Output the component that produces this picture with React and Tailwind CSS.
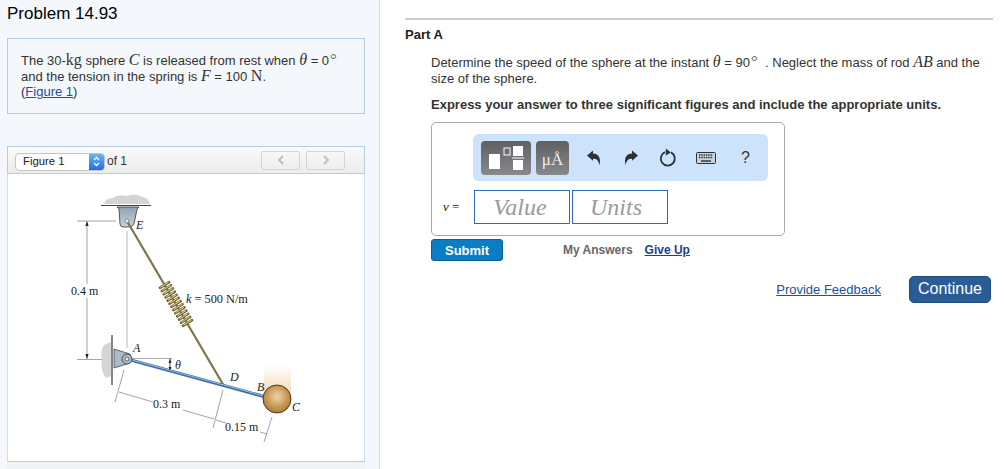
import React from "react";

const sans = { fontFamily: '"Liberation Sans", Arial, sans-serif' };

function M({ children, i = true }) {
  return <span className={`font-['Liberation_Serif',serif] text-[16px] leading-none ${i ? "italic" : ""}`}>{children}</span>;
}

function Deg() {
  return <span className="font-['Liberation_Serif',serif] text-[17px] leading-none text-[#666] ml-[1px]">°</span>;
}

function Diagram() {
  const t = { fontFamily: '"Liberation Serif", serif', fontSize: 12, fill: "#222" };
  const coils = [];
  for (let k = 0; k < 13; k++) {
    const x = 164.5 + (k * 23) / 12;
    const y = 285 + (k * 38) / 12;
    coils.push(<line key={k} x1={x - 4.6} y1={y + 2.9} x2={x + 4.6} y2={y - 2.9} stroke="#6f6230" strokeWidth="2.6" strokeLinecap="round" />);
    coils.push(<line key={"h" + k} x1={x - 3.8} y1={y + 2.1} x2={x + 3.8} y2={y - 2.7} stroke="#e3d79b" strokeWidth="1" strokeLinecap="round" />);
  }
  return (
    <svg width="379" height="287" viewBox="0 174 379 287" className="block">
      <defs>
        <radialGradient id="ball" cx="0.5" cy="0.42" r="0.6">
          <stop offset="0" stopColor="#ecd6ae" />
          <stop offset="0.6" stopColor="#c99a55" />
          <stop offset="1" stopColor="#a87836" />
        </radialGradient>
        <linearGradient id="blur" x1="0" y1="0" x2="0" y2="1">
          <stop offset="0" stopColor="#fff" />
          <stop offset="1" stopColor="#f3dcb6" />
        </linearGradient>
        <linearGradient id="plate" x1="0" y1="0" x2="0" y2="1">
          <stop offset="0" stopColor="#8ea3b3" />
          <stop offset="1" stopColor="#c6d3dd" />
        </linearGradient>
      </defs>
      <path d="M104 204 Q105 198 113 198 Q118 194 127 196 Q136 193 142 197 Q149 198 150 204 Z" fill="#d2d4d5" />
      <line x1="101" y1="205.5" x2="151" y2="205.5" stroke="#444" strokeWidth="1.2" />
      <path d="M117 207 H139 L137 209 L134 224 Q133 227 128 227 H124 Q120 227 120 224 L119 209 Z" fill="url(#plate)" stroke="#333" strokeWidth="0.8" />
      <line x1="127" y1="231" x2="127" y2="348" stroke="#b4b6b8" strokeWidth="1" />
      <line x1="77" y1="221" x2="116" y2="221" stroke="#666" strokeWidth="0.6" />
      <line x1="87" y1="222" x2="87" y2="284" stroke="#666" strokeWidth="0.6" />
      <line x1="87" y1="298" x2="87" y2="359" stroke="#666" strokeWidth="0.6" />
      <path d="M87 221 l-1.6 5 h3.2 Z M87 359 l-1.6 -5 h3.2 Z" fill="#222" />
      <line x1="77" y1="359.5" x2="104" y2="359.5" stroke="#666" strokeWidth="0.6" />
      <text x="71" y="295" style={t}>0.4 m</text>

      <line x1="127" y1="221" x2="224" y2="386" stroke="#80764a" strokeWidth="2.2" />
      {coils}
      <circle cx="127" cy="221" r="2" fill="#eee" stroke="#555" strokeWidth="0.6" />
      <text x="136" y="229" style={{ ...t, fontStyle: "italic" }}>E</text>
      <text x="186" y="303" style={{ ...t, fontSize: 12.3 }}><tspan fontStyle="italic">k</tspan> = 500 N/m</text>

      <path d="M104 345 Q100 352 102 360 Q100 370 106 378 L111 376 V342 Z" fill="#d2d4d5" />
      <line x1="112" y1="335" x2="112" y2="385" stroke="#444" strokeWidth="1.3" />
      <path d="M114 349 L130 354 Q133 359 130 363 L114 368 Z" fill="#a9bccb" stroke="#333" strokeWidth="0.7" />
      <line x1="127" y1="358.5" x2="172" y2="358.5" stroke="#777" strokeWidth="0.6" />
      <path d="M170 358.5 V370" stroke="#222" strokeWidth="0.8" />
      <path d="M170 359 l-1.5 4 h3 Z M170 371 l-1.5 -4 h3 Z" fill="#222" />
      <text x="175" y="369" style={{ ...t, fontStyle: "italic" }}>θ</text>
      <text x="133" y="352" style={{ ...t, fontStyle: "italic" }}>A</text>

      <rect x="264" y="365" width="27" height="28" fill="url(#blur)" />
      <line x1="127" y1="359" x2="264" y2="396.5" stroke="#3b6ea8" strokeWidth="3.2" />
      <line x1="127" y1="358.6" x2="264" y2="396" stroke="#a6c6e6" strokeWidth="0.9" />
      <circle cx="127" cy="359" r="5" fill="#a9bccb" stroke="#333" strokeWidth="0.8" />
      <circle cx="127" cy="359" r="2" fill="#dfe7ee" stroke="#333" strokeWidth="0.6" />
      <circle cx="277" cy="399" r="14" fill="url(#ball)" stroke="#3a2d1a" strokeWidth="0.9" />
      <text x="230" y="381" style={{ ...t, fontStyle: "italic" }}>D</text>
      <text x="257" y="391" style={{ ...t, fontStyle: "italic" }}>B</text>
      <text x="292" y="411" style={{ ...t, fontStyle: "italic" }}>C</text>

      <g stroke="#666" strokeWidth="0.6" fill="none">
        <line x1="124" y1="370" x2="115" y2="402" />
        <line x1="119" y1="392" x2="153" y2="402" />
        <line x1="183" y1="410" x2="214" y2="419" />
        <line x1="223" y1="390" x2="213" y2="428" />
        <line x1="216" y1="420" x2="226" y2="423" />
        <line x1="260" y1="432" x2="267" y2="434" />
        <line x1="272" y1="417" x2="264" y2="442" />
      </g>
      <text x="153" y="408" style={t}>0.3 m</text>
      <text x="225" y="431" style={t}>0.15 m</text>
    </svg>
  );
}

function Chevron({ dir }) {
  return (
    <svg width="10" height="10" viewBox="0 0 10 10">
      <path d={dir === "l" ? "M7 1 L3 5 L7 9" : "M3 1 L7 5 L3 9"} fill="none" stroke="#b9bcbf" strokeWidth="1.8" />
    </svg>
  );
}

function Left() {
  return (
    <div className="w-[380px] h-[469px] shrink-0 bg-[#f4f8fd] border-r border-[#cfdeec] flex flex-col overflow-hidden">
      <h1 className="pl-[7px] pt-[5px] h-[38px] text-[17px] leading-[18px] text-black">Problem 14.93</h1>
      <div className="mx-[7px] w-[358px] h-[76px] border border-[#b7cde0] pl-[13px] pt-[12px] text-[13px] leading-[16px] text-[#333]">
        <div className="h-[17px] whitespace-nowrap">The 30-<M i={false}>kg</M> sphere <M>C</M> is released from rest when <M>θ</M> = 0<Deg /></div>
        <div className="h-[16px] whitespace-nowrap">and the tension in the spring is <M>F</M> = 100 <M i={false}>N</M>.</div>
        <div className="h-[16px]">(<a className="text-[#1d4f9c] underline">Figure 1</a>)</div>
      </div>
      <div className="mt-[32px] mx-[7px] w-[358px] h-[28px] border border-[#b7cde0] bg-gradient-to-b from-[#fafafa] to-[#ececec] flex items-center pl-[7px] pr-[19px]">
        <div className="mt-[3px] w-[90px] h-[18px] rounded-[4px] bg-white border border-[#c4c4c4] flex items-center overflow-hidden">
          <span className="flex-1 pl-[7px] text-[11.3px] text-[#222] leading-none">Figure 1</span>
          <span className="w-[15px] h-full bg-gradient-to-b from-[#6fb0f7] to-[#1a6fe0] flex items-center justify-center">
            <svg width="9" height="13" viewBox="0 0 9 13"><path d="M2 5 L4.5 2.5 L7 5 M2 8 L4.5 10.5 L7 8" fill="none" stroke="#fff" strokeWidth="1.3" /></svg>
          </span>
        </div>
        <span className="ml-[2px] mt-[2px] text-[12px] text-[#333]">of 1</span>
        <div className="ml-auto flex gap-[6px]">
          <span className="w-[39px] h-[19px] border border-[#d4d4d4] rounded-[2px] flex items-center justify-center"><Chevron dir="l" /></span>
          <span className="w-[39px] h-[19px] border border-[#d4d4d4] rounded-[2px] flex items-center justify-center"><Chevron dir="r" /></span>
        </div>
      </div>
      <div className="ml-[7px] w-[358px] h-[287px] bg-white border-x border-[#cfdeec] overflow-hidden relative">
        <div className="absolute left-[-8px] top-0"><Diagram /></div>
      </div>
      <div className="mx-[7px] w-[358px] flex-1 border-t border-[#b7cde0] bg-[#f2f3f4]" />
    </div>
  );
}

function Tool({ children, className = "" }) {
  return <span className={`flex items-center justify-center ${className}`}>{children}</span>;
}

function Right() {
  return (
    <div className="flex-1 min-w-0 pl-[25px] pr-[12px] pt-[18px] bg-white">
      <div className="h-[2px] bg-[#cccccc]" />
      <h2 className="mt-[7px] text-[13px] leading-[16px] font-bold text-[#222]">Part A</h2>
      <div className="pl-[26px]">
        <div className="mt-[10px] text-[13px] leading-[16px] text-[#333] whitespace-nowrap">
          <div className="h-[18px]">Determine the speed of the sphere at the instant <M>θ</M> = 90<Deg />&nbsp; . Neglect the mass of rod <M>AB</M> and the</div>
          <div className="h-[16px]">size of the sphere.</div>
        </div>
        <p className="mt-[10px] text-[13px] leading-[16px] font-bold text-[#333] whitespace-nowrap">Express your answer to three significant figures and include the appropriate units.</p>
        <div className="mt-[9px] w-[354px] h-[114px] border border-[#aaaaaa] rounded-[5px] pt-[11px]">
          <div className="ml-[41px] w-[295px] h-[47px] rounded-[6px] bg-[#cce3fb] flex items-center pl-[8px]">
            <span className="w-[50px] h-[34px] rounded-[4px] bg-gradient-to-b from-[#5f6063] to-[#88898c] flex items-center justify-center">
              <svg width="36" height="26" viewBox="0 0 36 26">
                <rect x="1" y="9" width="11" height="15" fill="#fff" />
                <rect x="16" y="3" width="6" height="7" fill="none" stroke="#fff" strokeWidth="1" />
                <rect x="25" y="1" width="10" height="10" fill="#fff" />
                <line x1="24" y1="13" x2="36" y2="13" stroke="#fff" />
                <rect x="25" y="15" width="10" height="10" fill="#fff" />
              </svg>
            </span>
            <span className="ml-[5px] w-[33px] h-[34px] rounded-[4px] bg-gradient-to-b from-[#5f6063] to-[#88898c] flex items-center justify-center font-['Liberation_Serif',serif] text-[17px] text-[#eeeeee] leading-none pt-[4px]">μÅ</span>
            <Tool className="ml-[15px] w-[18px]">
              <svg width="15" height="16" viewBox="0 0 15 16"><path d="M1 5.5 L7 0.5 V3.6 C11.5 3.6 14 6.6 14 11.5 L13.5 15.5 C12.5 10.5 11 8.8 7 8.8 V10.8 Z" fill="#2c3136" /></svg>
            </Tool>
            <Tool className="ml-[20px] w-[18px]">
              <svg width="15" height="16" viewBox="0 0 15 16"><path d="M14 5.5 L8 0.5 V3.6 C3.5 3.6 1 6.6 1 11.5 L1.5 15.5 C2.5 10.5 4 8.8 8 8.8 V10.8 Z" fill="#2c3136" /></svg>
            </Tool>
            <Tool className="ml-[19px] w-[18px]">
              <svg width="18" height="19" viewBox="0 0 18 19"><path d="M12 4.4 A7 7 0 1 1 6 4.2" fill="none" stroke="#2c3136" strokeWidth="1.8" /><path d="M6.8 0.5 L11.8 4.4 L6.8 7.5 Z" fill="#2c3136" /></svg>
            </Tool>
            <Tool className="ml-[19px] w-[20px]">
              <svg width="20" height="12" viewBox="0 0 20 12"><rect x="0.5" y="0.5" width="19" height="11" rx="1" fill="#c6d3dd" stroke="#2c3136" /><path d="M3 3 H17 M3 5.5 H17" stroke="#2c3136" strokeDasharray="1.4 0.9" strokeWidth="1.4" /><path d="M5 9 H15" stroke="#2c3136" strokeWidth="1.4" /></svg>
            </Tool>
            <span className="ml-[25px] text-[16px] leading-none text-[#333]">?</span>
          </div>
          <div className="mt-[9px] flex items-center">
            <span className="w-[42px] pl-[11px] text-[13px] text-[#222] font-['Liberation_Serif',serif] whitespace-nowrap"><i>v</i> =</span>
            <span className="w-[96px] h-[34px] border border-[#2e6dbd] bg-white flex items-center justify-center pr-[4px] font-['Liberation_Serif',serif] italic text-[24px] text-[#9a9a9a]">Value</span>
            <span className="ml-[2px] w-[96px] h-[34px] border border-[#2e6dbd] bg-white flex items-center justify-center pr-[8px] font-['Liberation_Serif',serif] italic text-[24px] text-[#9a9a9a]">Units</span>
          </div>
        </div>
        <div className="mt-[3px] flex items-center h-[22px]">
          <button className="w-[72px] h-[22px] rounded-[3px] bg-[#0a7dc6] border border-[#0a5f96] text-white text-[13px] font-bold leading-none">Submit</button>
          <span className="ml-[60px] text-[12px] font-bold text-[#666]">My Answers</span>
          <a className="ml-[12px] text-[12px] font-bold text-[#1d3f94] underline">Give Up</a>
        </div>
      </div>
      <div className="mt-[15px] flex items-center justify-end h-[27px] pr-[2px]">
        <a className="mt-[1px] text-[13px] text-[#1d4f9c] underline">Provide Feedback</a>
        <button className="ml-[28px] w-[82px] h-[27px] pb-[2px] rounded-[5px] bg-[#2a5d96] border border-[#1e4a7c] text-white text-[16px] leading-none">Continue</button>
      </div>
    </div>
  );
}

export default function App() {
  return (
    <div className="w-[1005px] h-[469px] flex overflow-hidden bg-white" style={sans}>
      <Left />
      <Right />
    </div>
  );
}
